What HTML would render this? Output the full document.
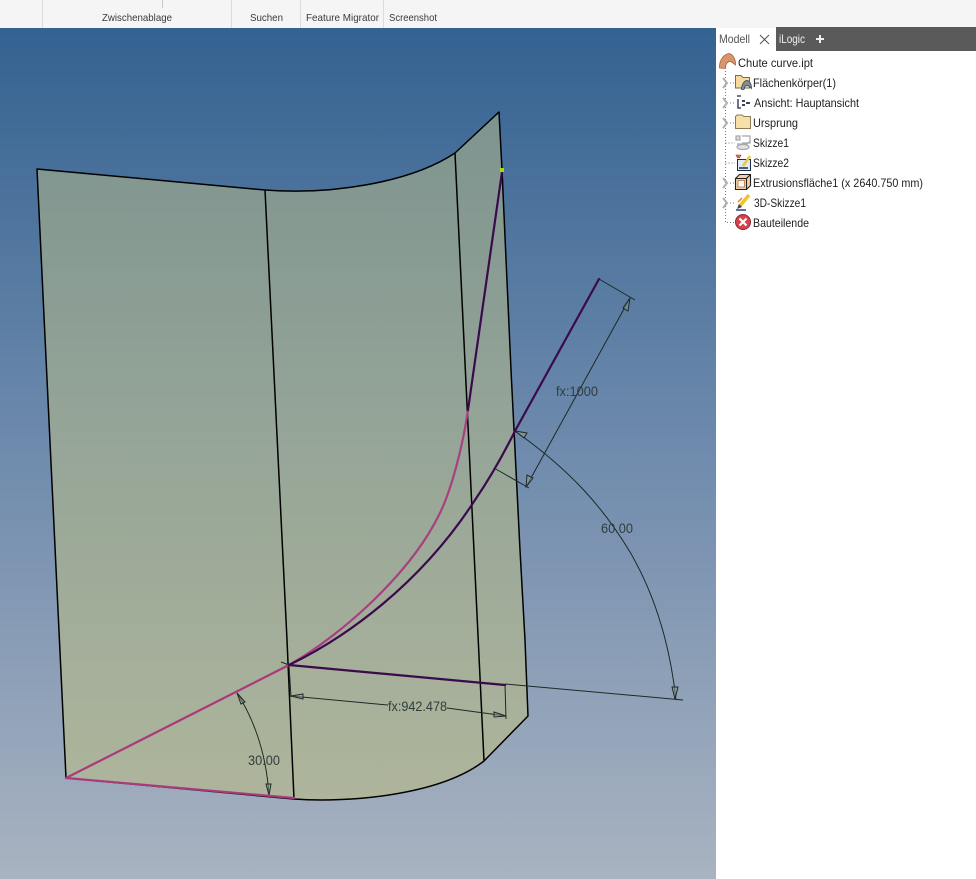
<!DOCTYPE html>
<html><head><meta charset="utf-8"><title>Chute curve</title>
<style>
html,body{margin:0;padding:0;background:#fff;width:976px;height:879px;overflow:hidden}
svg{display:block}
text{font-family:"Liberation Sans",sans-serif}
</style></head><body>
<svg xmlns="http://www.w3.org/2000/svg" width="976" height="879" viewBox="0 0 976 879">
<defs>
<linearGradient id="bg" gradientUnits="userSpaceOnUse" x1="0" y1="28" x2="0" y2="879">
<stop offset="0" stop-color="#346291"/><stop offset="0.5" stop-color="#6f8bad"/><stop offset="1" stop-color="#a9b3c1"/>
</linearGradient>
<linearGradient id="sf" gradientUnits="userSpaceOnUse" x1="0" y1="112" x2="0" y2="800">
<stop offset="0" stop-color="#7e948f"/><stop offset="0.5" stop-color="#97a698"/><stop offset="1" stop-color="#aeb59b"/>
</linearGradient>
</defs>
<!-- toolbar -->
<rect width="976" height="28" fill="#f5f5f5"/>
<g stroke="#dcdcdc" stroke-width="1">
<path d="M42.5 0V28M231.5 0V28M300.5 0V28M383.5 0V28"/><path d="M162.5 0V8" stroke="#c8c8c8"/>
</g>
<g font-size="10.5" fill="#3a3a3a">
<text x="102" y="21" textLength="70" lengthAdjust="spacingAndGlyphs">Zwischenablage</text>
<text x="250" y="21" textLength="33" lengthAdjust="spacingAndGlyphs">Suchen</text>
<text x="306" y="21" textLength="73" lengthAdjust="spacingAndGlyphs">Feature Migrator</text>
<text x="389" y="21" textLength="48" lengthAdjust="spacingAndGlyphs">Screenshot</text>
</g>
<!-- viewport -->
<rect y="28" width="716" height="851" fill="url(#bg)"/>
<!-- surface -->
<path d="M37 169L265 190C330 195 410 183 455 153L499 112L502 170L511 370L520 550L525 640L528 716L484 761C440 795 350 803 294 799L66 778Z" fill="url(#sf)" stroke="#000" stroke-width="1.5" stroke-linejoin="round"/>
<path d="M265 190L287 640L294 799M455 153L484 761" fill="none" stroke="#000" stroke-width="1.5"/>
<!-- dimension thin lines -->
<g fill="none" stroke="#1c2a26" stroke-width="1">
<path d="M599 279L635 300"/>
<path d="M630 298L526 487"/>
<path d="M494 468L529 488"/>
<path d="M515 431C570 470 603 507 630 552C655 595 670 645 676 700"/>
<path d="M505 684L683 700"/>
<path d="M291 696L388 705M447 708L506 716"/>
<path d="M505 685L506 719"/>
<path d="M289 665L291 697"/>
<path d="M281 662L289 665"/>
<path d="M237 693C252 716 266 750 269 795"/>
</g>
<!-- arrowheads -->
<g fill="#8fa090" fill-opacity=".5" stroke="#1c2a26" stroke-width="1">
<path d="M630 298L628 311L623 308Z"/>
<path d="M526 487L527 475L533 478Z"/>
<path d="M515 431L527 433L524 438Z"/>
<path d="M675 699L672 687L678 687Z"/>
<path d="M291 696L303 694L303 699Z"/>
<path d="M506 716L494 712L494 717Z"/>
<path d="M237 693L245 702L241 704Z"/>
<path d="M269 795L266 784L271 784Z"/>
</g>
<!-- sketch curves -->
<g fill="none" stroke-linecap="round">
<path d="M66 778L289 665" stroke="#a93a7c" stroke-width="2.2"/>
<path d="M66 778L294 798" stroke="#a93a7c" stroke-width="2.2"/>
<path d="M289 665C340 636 410 575 440 513C452 488 463 445 468 410" stroke="#a83f7f" stroke-width="2.2"/>
<path d="M468 410L502 172" stroke="#3b0a4c" stroke-width="2.2"/>
<path d="M289 665C345 638 420 585 475 500C490 478 503 455 515 431L599 279" stroke="#3b0a4c" stroke-width="2.2"/>
<path d="M289 665L505 685" stroke="#3b0a4c" stroke-width="2.2"/>
</g>
<rect x="500" y="168" width="4" height="4" fill="#9ade16"/>
<!-- dimension text -->
<g font-size="13.5" fill="#2f3e3e">
<text x="556" y="396" textLength="42" lengthAdjust="spacingAndGlyphs">fx:1000</text>
<text x="601" y="533" textLength="32" lengthAdjust="spacingAndGlyphs">60.00</text>
<text x="388" y="711" textLength="59" lengthAdjust="spacingAndGlyphs">fx:942.478</text>
<text x="248" y="765" textLength="32" lengthAdjust="spacingAndGlyphs">30.00</text>
</g>
<!-- panel -->
<rect x="716" y="28" width="260" height="851" fill="#fff"/>
<rect x="776" y="27" width="200" height="24" fill="#5a5a5a"/>
<text x="719" y="43" font-size="12" fill="#555" textLength="31" lengthAdjust="spacingAndGlyphs">Modell</text>
<path d="M760 35L769 44M769 35L760 44" stroke="#555" stroke-width="1" fill="none"/>
<text x="779" y="43" font-size="12" fill="#f0f0f0" textLength="26" lengthAdjust="spacingAndGlyphs">iLogic</text>
<path d="M816 39H824M820 35V43" stroke="#eee" stroke-width="2" fill="none"/>
<!-- tree lines -->
<path d="M725.5 71V222.5H735M730 83H735M730 103H735M730 123H735M725.5 143H735M725.5 163H735M730 183H735M730 203H735" fill="none" stroke="#777" stroke-width="1" stroke-dasharray="1 2"/>
<!-- chevrons -->
<g fill="none" stroke="#b0b0b0" stroke-width="2">
<path d="M723 78L727 83L723 88M723 98L727 103L723 108M723 118L727 123L723 128M723 178L727 183L723 188M723 198L727 203L723 208"/>
</g>
<!-- root icon -->
<path d="M719.500 68C719 60 724 54 729 53.500C733 54 736 60 735.500 65L731 61.500C727.500 61 725.500 64 725.500 68.500Z" fill="#d9946a" stroke="#a5603a" stroke-width="0.8"/>
<!-- surface bodies icon -->
<path d="M735.500 88V75.500H741L743 77.500H749.500V88Z" fill="#f6dc9c" stroke="#7a6a45" stroke-width="1"/>
<path d="M741.500 89.500C741.500 84 744.500 80.500 747 80.500C749.500 80.500 751.500 84 751.500 88.500L748 85.500L745 86L744 89.500Z" fill="#7a8ea3" stroke="#444" stroke-width="0.8"/>
<!-- view icon -->
<g fill="none" stroke="#1d2a44" stroke-width="1.300">
<path d="M737 96H741M738 99V108H741"/><path d="M742 101H745M742 105H745M746 103H750" stroke-width="1.700"/>
</g>
<!-- folder -->
<path d="M735.500 128.500V116.500L737 115H742L744 116.500H750.500V128.500Z" fill="#f6dfa8" stroke="#8a7a55" stroke-width="1"/>
<!-- sketch 1 icon -->
<g fill="none" stroke="#a8a8a8" stroke-width="1.200">
<rect x="736" y="136" width="4" height="4" fill="#ddd"/>
<path d="M742 136H750V143H742M737 144H747L750 141"/>
<ellipse cx="743" cy="147" rx="6" ry="2.500" fill="#e2e2e2"/>
</g>
<!-- sketch 2 icon -->
<rect x="737.500" y="159.500" width="13" height="11" fill="#dfe9f7" stroke="#1e2a4a" stroke-width="1"/>
<path d="M736 155h5l-1.500 3h-2Z" fill="#e8732c" stroke="#a33" stroke-width=".6"/>
<path d="M743 166L750 156" stroke="#e8c93a" stroke-width="2.500"/>
<path d="M739 168H748" stroke="#1e2a4a" stroke-width="1.500"/>
<!-- extrusion icon -->
<path d="M735.500 178.500H746.500V189.500H735.500ZM735.500 178.500L739.500 174.500H750.500V185.500L746.500 189.500M746.500 178.500L750.500 174.500" fill="#f4cfa8" stroke="#222" stroke-width="1.100"/>
<rect x="738" y="180.500" width="6.500" height="6.500" fill="#fff" stroke="#b7703a" stroke-width=".8"/>
<!-- 3D sketch icon -->
<path d="M739 207L749 195" stroke="#eec32c" stroke-width="3.500"/>
<path d="M737 209L739 204L742 207Z" fill="#444"/>
<path d="M736 210H746" stroke="#2c3f86" stroke-width="1.500"/>
<path d="M738 202L742 198" stroke="#e77f2f" stroke-width="1.500"/>
<!-- end icon -->
<circle cx="743" cy="222" r="7.500" fill="#d8404a" stroke="#8d2a32" stroke-width="1"/>
<path d="M739.500 218.500L746.500 225.500M746.500 218.500L739.500 225.500" stroke="#fff" stroke-width="2.200"/>
<!-- tree labels -->
<g font-size="12" fill="#222">
<text x="738" y="67" textLength="75" lengthAdjust="spacingAndGlyphs">Chute curve.ipt</text>
<text x="753" y="87" textLength="83" lengthAdjust="spacingAndGlyphs">Flächenkörper(1)</text>
<text x="754" y="107" textLength="105" lengthAdjust="spacingAndGlyphs">Ansicht: Hauptansicht</text>
<text x="753" y="127" textLength="45" lengthAdjust="spacingAndGlyphs">Ursprung</text>
<text x="753" y="147" textLength="36" lengthAdjust="spacingAndGlyphs">Skizze1</text>
<text x="753" y="167" textLength="36" lengthAdjust="spacingAndGlyphs">Skizze2</text>
<text x="753" y="187" textLength="170" lengthAdjust="spacingAndGlyphs">Extrusionsfläche1 (x 2640.750 mm)</text>
<text x="754" y="207" textLength="52" lengthAdjust="spacingAndGlyphs">3D-Skizze1</text>
<text x="753" y="227" textLength="56" lengthAdjust="spacingAndGlyphs">Bauteilende</text>
</g>
</svg>
</body></html>
